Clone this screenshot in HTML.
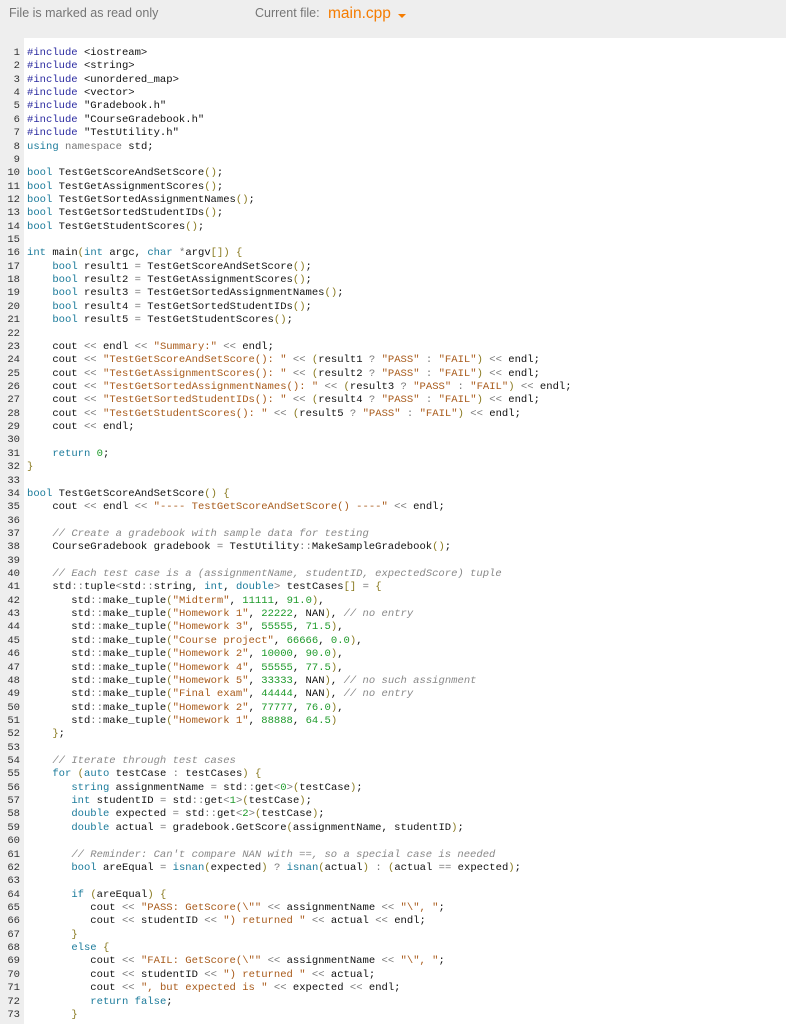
<!DOCTYPE html>
<html><head><meta charset="utf-8"><style>
body{margin:0;width:786px;height:1024px;background:#fff;overflow:hidden;font-family:"Liberation Sans",sans-serif}
.hd{position:absolute;left:0;top:0;width:786px;height:38px;background:#eeeeee}
.ro{position:absolute;left:9px;top:6px;font-size:12.5px;color:#757575}
.cf{position:absolute;left:255px;top:6px;font-size:12.5px;color:#757575}
.mf{position:absolute;left:328px;top:5px;font-size:15.5px;color:#f57c00}
.tri{position:absolute;left:398px;top:14px;width:0;height:0;border-left:4px solid transparent;border-right:4px solid transparent;border-top:4px solid #f57c00}
.gut{position:absolute;left:0;top:38px;width:24px;height:986px;background:#eeeeee}
pre{position:absolute;left:0;top:47px;margin:0;font-family:"Liberation Mono",monospace;font-size:10.55px;line-height:13.36px;color:#111}
.ln{display:inline-block;width:20px;text-align:right;color:#333;margin-right:7px}
.p{color:#2a2aa0}.k{color:#1a7a9a}.s{color:#a85a1a}.n{color:#1d9a2a}.c{color:#888;font-style:italic}.b{color:#8a7a20}.o{color:#777}
</style></head><body>
<div class="hd"><span class="ro">File is marked as read only</span><span class="cf">Current file:</span><span class="mf">main.cpp</span><span class="tri"></span></div>
<div class="gut"></div>
<pre><span class="ln">1</span><span class="p">#include</span> &lt;iostream&gt;
<span class="ln">2</span><span class="p">#include</span> &lt;string&gt;
<span class="ln">3</span><span class="p">#include</span> &lt;unordered_map&gt;
<span class="ln">4</span><span class="p">#include</span> &lt;vector&gt;
<span class="ln">5</span><span class="p">#include</span> "Gradebook.h"
<span class="ln">6</span><span class="p">#include</span> "CourseGradebook.h"
<span class="ln">7</span><span class="p">#include</span> "TestUtility.h"
<span class="ln">8</span><span class="k">using</span> <span class="o">namespace</span> std;
<span class="ln">9</span>
<span class="ln">10</span><span class="k">bool</span> TestGetScoreAndSetScore<span class="b">()</span>;
<span class="ln">11</span><span class="k">bool</span> TestGetAssignmentScores<span class="b">()</span>;
<span class="ln">12</span><span class="k">bool</span> TestGetSortedAssignmentNames<span class="b">()</span>;
<span class="ln">13</span><span class="k">bool</span> TestGetSortedStudentIDs<span class="b">()</span>;
<span class="ln">14</span><span class="k">bool</span> TestGetStudentScores<span class="b">()</span>;
<span class="ln">15</span>
<span class="ln">16</span><span class="k">int</span> main<span class="b">(</span><span class="k">int</span> argc, <span class="k">char</span> <span class="o">*</span>argv<span class="b">[])</span> <span class="b">{</span>
<span class="ln">17</span>    <span class="k">bool</span> result1 <span class="o">=</span> TestGetScoreAndSetScore<span class="b">()</span>;
<span class="ln">18</span>    <span class="k">bool</span> result2 <span class="o">=</span> TestGetAssignmentScores<span class="b">()</span>;
<span class="ln">19</span>    <span class="k">bool</span> result3 <span class="o">=</span> TestGetSortedAssignmentNames<span class="b">()</span>;
<span class="ln">20</span>    <span class="k">bool</span> result4 <span class="o">=</span> TestGetSortedStudentIDs<span class="b">()</span>;
<span class="ln">21</span>    <span class="k">bool</span> result5 <span class="o">=</span> TestGetStudentScores<span class="b">()</span>;
<span class="ln">22</span>
<span class="ln">23</span>    cout <span class="o">&lt;&lt;</span> endl <span class="o">&lt;&lt;</span> <span class="s">"Summary:"</span> <span class="o">&lt;&lt;</span> endl;
<span class="ln">24</span>    cout <span class="o">&lt;&lt;</span> <span class="s">"TestGetScoreAndSetScore(): "</span> <span class="o">&lt;&lt;</span> <span class="b">(</span>result1 <span class="o">?</span> <span class="s">"PASS"</span> <span class="o">:</span> <span class="s">"FAIL"</span><span class="b">)</span> <span class="o">&lt;&lt;</span> endl;
<span class="ln">25</span>    cout <span class="o">&lt;&lt;</span> <span class="s">"TestGetAssignmentScores(): "</span> <span class="o">&lt;&lt;</span> <span class="b">(</span>result2 <span class="o">?</span> <span class="s">"PASS"</span> <span class="o">:</span> <span class="s">"FAIL"</span><span class="b">)</span> <span class="o">&lt;&lt;</span> endl;
<span class="ln">26</span>    cout <span class="o">&lt;&lt;</span> <span class="s">"TestGetSortedAssignmentNames(): "</span> <span class="o">&lt;&lt;</span> <span class="b">(</span>result3 <span class="o">?</span> <span class="s">"PASS"</span> <span class="o">:</span> <span class="s">"FAIL"</span><span class="b">)</span> <span class="o">&lt;&lt;</span> endl;
<span class="ln">27</span>    cout <span class="o">&lt;&lt;</span> <span class="s">"TestGetSortedStudentIDs(): "</span> <span class="o">&lt;&lt;</span> <span class="b">(</span>result4 <span class="o">?</span> <span class="s">"PASS"</span> <span class="o">:</span> <span class="s">"FAIL"</span><span class="b">)</span> <span class="o">&lt;&lt;</span> endl;
<span class="ln">28</span>    cout <span class="o">&lt;&lt;</span> <span class="s">"TestGetStudentScores(): "</span> <span class="o">&lt;&lt;</span> <span class="b">(</span>result5 <span class="o">?</span> <span class="s">"PASS"</span> <span class="o">:</span> <span class="s">"FAIL"</span><span class="b">)</span> <span class="o">&lt;&lt;</span> endl;
<span class="ln">29</span>    cout <span class="o">&lt;&lt;</span> endl;
<span class="ln">30</span>
<span class="ln">31</span>    <span class="k">return</span> <span class="n">0</span>;
<span class="ln">32</span><span class="b">}</span>
<span class="ln">33</span>
<span class="ln">34</span><span class="k">bool</span> TestGetScoreAndSetScore<span class="b">()</span> <span class="b">{</span>
<span class="ln">35</span>    cout <span class="o">&lt;&lt;</span> endl <span class="o">&lt;&lt;</span> <span class="s">"---- TestGetScoreAndSetScore() ----"</span> <span class="o">&lt;&lt;</span> endl;
<span class="ln">36</span>
<span class="ln">37</span>    <span class="c">// Create a gradebook with sample data for testing</span>
<span class="ln">38</span>    CourseGradebook gradebook <span class="o">=</span> TestUtility<span class="o">::</span>MakeSampleGradebook<span class="b">()</span>;
<span class="ln">39</span>
<span class="ln">40</span>    <span class="c">// Each test case is a (assignmentName, studentID, expectedScore) tuple</span>
<span class="ln">41</span>    std<span class="o">::</span>tuple<span class="o">&lt;</span>std<span class="o">::</span>string, <span class="k">int</span>, <span class="k">double</span><span class="o">&gt;</span> testCases<span class="b">[]</span> <span class="o">=</span> <span class="b">{</span>
<span class="ln">42</span>       std<span class="o">::</span>make_tuple<span class="b">(</span><span class="s">"Midterm"</span>, <span class="n">11111</span>, <span class="n">91.0</span><span class="b">)</span>,
<span class="ln">43</span>       std<span class="o">::</span>make_tuple<span class="b">(</span><span class="s">"Homework 1"</span>, <span class="n">22222</span>, NAN<span class="b">)</span>, <span class="c">// no entry</span>
<span class="ln">44</span>       std<span class="o">::</span>make_tuple<span class="b">(</span><span class="s">"Homework 3"</span>, <span class="n">55555</span>, <span class="n">71.5</span><span class="b">)</span>,
<span class="ln">45</span>       std<span class="o">::</span>make_tuple<span class="b">(</span><span class="s">"Course project"</span>, <span class="n">66666</span>, <span class="n">0.0</span><span class="b">)</span>,
<span class="ln">46</span>       std<span class="o">::</span>make_tuple<span class="b">(</span><span class="s">"Homework 2"</span>, <span class="n">10000</span>, <span class="n">90.0</span><span class="b">)</span>,
<span class="ln">47</span>       std<span class="o">::</span>make_tuple<span class="b">(</span><span class="s">"Homework 4"</span>, <span class="n">55555</span>, <span class="n">77.5</span><span class="b">)</span>,
<span class="ln">48</span>       std<span class="o">::</span>make_tuple<span class="b">(</span><span class="s">"Homework 5"</span>, <span class="n">33333</span>, NAN<span class="b">)</span>, <span class="c">// no such assignment</span>
<span class="ln">49</span>       std<span class="o">::</span>make_tuple<span class="b">(</span><span class="s">"Final exam"</span>, <span class="n">44444</span>, NAN<span class="b">)</span>, <span class="c">// no entry</span>
<span class="ln">50</span>       std<span class="o">::</span>make_tuple<span class="b">(</span><span class="s">"Homework 2"</span>, <span class="n">77777</span>, <span class="n">76.0</span><span class="b">)</span>,
<span class="ln">51</span>       std<span class="o">::</span>make_tuple<span class="b">(</span><span class="s">"Homework 1"</span>, <span class="n">88888</span>, <span class="n">64.5</span><span class="b">)</span>
<span class="ln">52</span>    <span class="b">}</span>;
<span class="ln">53</span>
<span class="ln">54</span>    <span class="c">// Iterate through test cases</span>
<span class="ln">55</span>    <span class="k">for</span> <span class="b">(</span><span class="k">auto</span> testCase <span class="o">:</span> testCases<span class="b">)</span> <span class="b">{</span>
<span class="ln">56</span>       <span class="k">string</span> assignmentName <span class="o">=</span> std<span class="o">::</span>get<span class="o">&lt;</span><span class="n">0</span><span class="o">&gt;</span><span class="b">(</span>testCase<span class="b">)</span>;
<span class="ln">57</span>       <span class="k">int</span> studentID <span class="o">=</span> std<span class="o">::</span>get<span class="o">&lt;</span><span class="n">1</span><span class="o">&gt;</span><span class="b">(</span>testCase<span class="b">)</span>;
<span class="ln">58</span>       <span class="k">double</span> expected <span class="o">=</span> std<span class="o">::</span>get<span class="o">&lt;</span><span class="n">2</span><span class="o">&gt;</span><span class="b">(</span>testCase<span class="b">)</span>;
<span class="ln">59</span>       <span class="k">double</span> actual <span class="o">=</span> gradebook.GetScore<span class="b">(</span>assignmentName, studentID<span class="b">)</span>;
<span class="ln">60</span>
<span class="ln">61</span>       <span class="c">// Reminder: Can't compare NAN with ==, so a special case is needed</span>
<span class="ln">62</span>       <span class="k">bool</span> areEqual <span class="o">=</span> <span class="k">isnan</span><span class="b">(</span>expected<span class="b">)</span> <span class="o">?</span> <span class="k">isnan</span><span class="b">(</span>actual<span class="b">)</span> <span class="o">:</span> <span class="b">(</span>actual <span class="o">==</span> expected<span class="b">)</span>;
<span class="ln">63</span>
<span class="ln">64</span>       <span class="k">if</span> <span class="b">(</span>areEqual<span class="b">)</span> <span class="b">{</span>
<span class="ln">65</span>          cout <span class="o">&lt;&lt;</span> <span class="s">"PASS: GetScore(\""</span> <span class="o">&lt;&lt;</span> assignmentName <span class="o">&lt;&lt;</span> <span class="s">"\", "</span>;
<span class="ln">66</span>          cout <span class="o">&lt;&lt;</span> studentID <span class="o">&lt;&lt;</span> <span class="s">") returned "</span> <span class="o">&lt;&lt;</span> actual <span class="o">&lt;&lt;</span> endl;
<span class="ln">67</span>       <span class="b">}</span>
<span class="ln">68</span>       <span class="k">else</span> <span class="b">{</span>
<span class="ln">69</span>          cout <span class="o">&lt;&lt;</span> <span class="s">"FAIL: GetScore(\""</span> <span class="o">&lt;&lt;</span> assignmentName <span class="o">&lt;&lt;</span> <span class="s">"\", "</span>;
<span class="ln">70</span>          cout <span class="o">&lt;&lt;</span> studentID <span class="o">&lt;&lt;</span> <span class="s">") returned "</span> <span class="o">&lt;&lt;</span> actual;
<span class="ln">71</span>          cout <span class="o">&lt;&lt;</span> <span class="s">", but expected is "</span> <span class="o">&lt;&lt;</span> expected <span class="o">&lt;&lt;</span> endl;
<span class="ln">72</span>          <span class="k">return</span> <span class="k">false</span>;
<span class="ln">73</span>       <span class="b">}</span>
</pre>
</body></html>
